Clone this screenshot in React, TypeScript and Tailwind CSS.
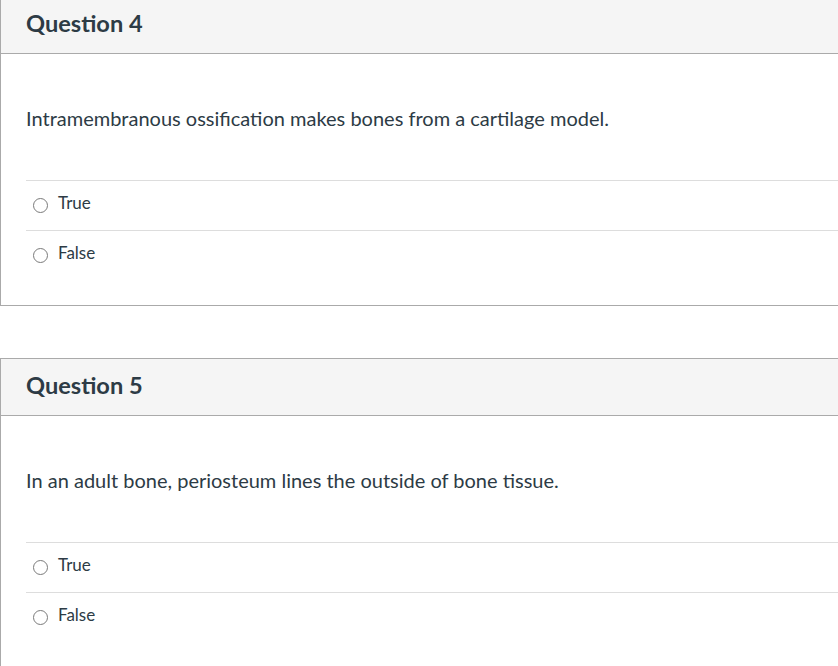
import React from "react";

const questions = [
  { title: "Question 4", text: "Intramembranous ossification makes bones from a cartilage model." },
  { title: "Question 5", text: "In an adult bone, periosteum lines the outside of bone tissue." },
];

function Radio() {
  return (
    <span className="w-[15px] h-[15px] rounded-full border border-[#7a7a7a] bg-white shrink-0" />
  );
}

function Answer({ label }: { label: string }) {
  return (
    <div className="border-t border-[#dddddd] h-[50px] flex items-center gap-[10px] pl-[7px]">
      <Radio />
      <span className="text-[17px] text-[#2d3b45] leading-[20px] pb-[5px]">{label}</span>
    </div>
  );
}

export default function App() {
  return (
    <div className="w-[838px] h-[666px] overflow-hidden bg-white" style={{ fontFamily: "Lato, 'Open Sans', sans-serif" }}>
      <div className="-mt-[4px] flex flex-col gap-[52px] w-[860px]">
        {questions.map((q) => (
          <div key={q.title} className="border border-[#aaaaaa]">
            <div className="h-[57px] bg-[#f5f5f5] border-b border-[#aaaaaa] flex items-center pl-[25px]">
              <h3 className="text-[23.6px] font-bold text-[#2d3b45] leading-[28px] pb-[4px]">{q.title}</h3>
            </div>
            <div className="pl-[25px] pt-[52px] pb-[25px]">
              <p className="text-[20px] text-[#2d3b45] leading-[24px] mb-[50px]">{q.text}</p>
              <Answer label="True" />
              <Answer label="False" />
            </div>
          </div>
        ))}
      </div>
    </div>
  );
}
